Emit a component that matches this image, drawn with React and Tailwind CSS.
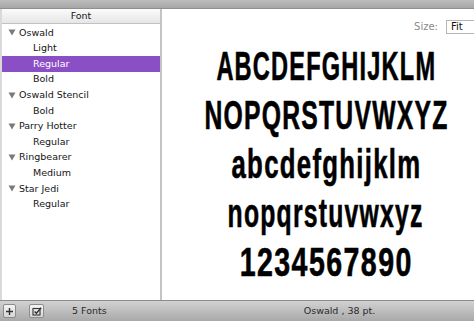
import React from 'react';

const families = [
  { name: 'Oswald', faces: ['Light', 'Regular', 'Bold'] },
  { name: 'Oswald Stencil', faces: ['Bold'] },
  { name: 'Parry Hotter', faces: ['Regular'] },
  { name: 'Ringbearer', faces: ['Medium'] },
  { name: 'Star Jedi', faces: ['Regular'] },
];

const ui = { fontFamily: '"DejaVu Sans", "Liberation Sans", sans-serif' };
const preview = { fontFamily: '"Liberation Sans Narrow", "Liberation Sans", sans-serif' };

const Triangle = () => (
  <svg width="8" height="7" viewBox="0 0 8 7" className="mr-[3px] shrink-0">
    <path d="M0.5 0.5 H7.5 L4 6.5 Z" fill="#7a7a7a" />
  </svg>
);

const PlusButton = () => (
  <div className="w-[13px] h-[14px] rounded-[2px] border border-[#8c8c8c] bg-gradient-to-b from-[#f4f4f4] to-[#d6d6d6] flex items-center justify-center">
    <svg width="9" height="9" viewBox="0 0 9 9">
      <path d="M4.5 1 V8 M1 4.5 H8" stroke="#333" strokeWidth="1.4" />
    </svg>
  </div>
);

const CheckButton = () => (
  <div className="w-[15px] h-[14px] rounded-[2px] border border-[#8c8c8c] bg-gradient-to-b from-[#f4f4f4] to-[#d6d6d6] flex items-center justify-center">
    <svg width="10" height="9" viewBox="0 0 10 9">
      <rect x="1" y="1.5" width="7" height="6.5" fill="none" stroke="#333" strokeWidth="1.1" />
      <path d="M2.6 4.4 L4.4 6.2 L9.2 0.8" fill="none" stroke="#333" strokeWidth="1.4" />
    </svg>
  </div>
);

export default function App() {
  return (
    <div className="w-[474px] h-[321px] flex flex-col overflow-hidden bg-white text-[#151515]" style={ui}>
      <div className="h-[9px] shrink-0 bg-gradient-to-b from-[#bdbdbd] to-[#a6a6a6] border-b border-[#8f8f8f]" />

      <div className="flex-1 flex min-h-0">
        <div className="w-[162px] shrink-0 flex flex-col border-l-2 border-[#d9d9d9] border-r-2 border-r-[#c4c4c4]">
          <div className="h-[15px] shrink-0 flex items-center justify-center text-[9.5px] bg-gradient-to-b from-[#fbfbfb] to-[#e6e6e6] border-b border-[#c2c2c2]">
            Font
          </div>
          <div className="pt-[1px]">
            {families.map((fam) => (
              <div key={fam.name}>
                <div className="h-[15.6px] flex items-center pl-[6px] text-[9.5px]">
                  <Triangle />
                  <span>{fam.name}</span>
                </div>
                {fam.faces.map((face, i) => {
                  const selected = fam.name === 'Oswald' && face === 'Regular';
                  return (
                    <div
                      key={face + i}
                      className={
                        selected
                          ? 'h-[15.6px] flex items-center pl-[31px] text-[9.5px] bg-[#8b4fc5] text-white'
                          : 'h-[15.6px] flex items-center pl-[31px] text-[9.5px]'
                      }
                    >
                      {face}
                    </div>
                  );
                })}
              </div>
            ))}
          </div>
        </div>

        <div className="flex-1 flex flex-col min-w-0">
          <div className="flex items-center justify-end pt-[10px] gap-[8px]">
            <span className="text-[10px] text-[#8a8a8a]">Size:</span>
            <div className="w-[28px] h-[14px] border border-[#b5b5b5] border-r-0 flex items-center pl-[4px] text-[10px] text-[#111] bg-white">
              Fit
            </div>
          </div>
          <div className="flex flex-col items-center pl-[16px] pt-[8px] text-black font-bold leading-[49px] text-[40px] tracking-[2px] [-webkit-text-stroke:0.6px_#000]" style={preview}>
            <div className="scale-x-[0.59] whitespace-nowrap">ABCDEFGHIJKLM</div>
            <div className="scale-x-[0.618] whitespace-nowrap">NOPQRSTUVWXYZ</div>
            <div className="scale-x-[0.644] whitespace-nowrap">abcdefghijklm</div>
            <div className="scale-x-[0.618] whitespace-nowrap">nopqrstuvwxyz</div>
            <div className="scale-x-[0.714] whitespace-nowrap">1234567890</div>
          </div>
        </div>
      </div>

      <div className="h-[21px] shrink-0 flex items-center border-t border-[#8a8a8a] bg-gradient-to-b from-[#d2d2d2] to-[#a9a9a9] text-[9.5px] text-[#2a2a2a]">
        <div className="flex items-center pl-[3px] gap-[13px]">
          <PlusButton />
          <CheckButton />
        </div>
        <span className="ml-[28px]">5 Fonts</span>
        <span className="ml-[197px]">Oswald , 38 pt.</span>
      </div>
    </div>
  );
}
